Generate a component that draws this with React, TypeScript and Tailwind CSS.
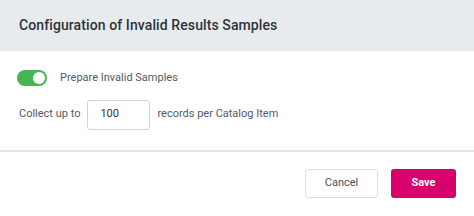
export default function App() {
  return (
    <div className="w-[474px] h-[216px] bg-white flex flex-col" style={{ fontFamily: 'Roboto, "Liberation Sans", sans-serif' }}>
      <div className="h-[51px] bg-[#e8ebee] flex items-center px-[19px]">
        <h1 className="text-[14px] font-medium text-[#2e333b] tracking-[0.1px]">Configuration of Invalid Results Samples</h1>
      </div>
      <div className="flex flex-col px-[17px] pt-[19px] h-[99px]">
        <div className="flex items-center gap-[13px]">
          <div className="w-[30px] h-[16px] rounded-full bg-[#46b553] relative">
            <div className="absolute right-[2px] top-[2px] w-[12px] h-[12px] rounded-full bg-white" />
          </div>
          <span className="text-[11px] text-[#555a60]">Prepare Invalid Samples</span>
        </div>
        <div className="flex items-center mt-[13px] pl-[2px]">
          <span className="text-[11px] text-[#555a60]">Collect up to</span>
          <div className="ml-[7px] w-[63px] h-[30px] border border-[#cfd3d8] rounded-[3px] flex items-center pl-[12px] text-[11px] text-[#333]">100</div>
          <span className="ml-[7px] text-[11px] text-[#555a60]">records per Catalog Item</span>
        </div>
      </div>
      <div className="h-[2px] bg-[#e6e6e6]" />
      <div className="flex justify-end gap-[13px] pr-[18px] pt-[17px]">
        <button className="w-[73px] h-[29px] border border-[#dcdfe3] rounded-[3px] bg-white text-[11px] text-[#4a4f55]">Cancel</button>
        <button className="w-[65px] h-[29px] rounded-[3px] bg-[#d8006f] text-[11px] font-bold text-white">Save</button>
      </div>
    </div>
  );
}
